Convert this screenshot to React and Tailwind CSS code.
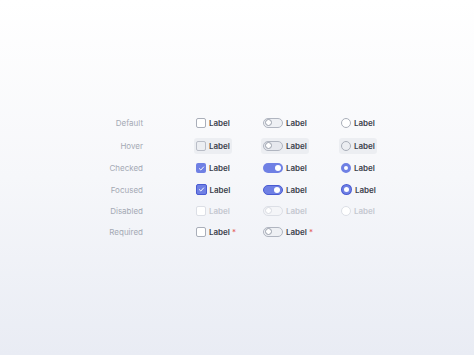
import React from 'react';

const Check = () => (
  <svg viewBox="0 0 10 10" className="w-[7px] h-[7px]" fill="none">
    <path d="M2 5.2l2 2 4-4.4" stroke="white" strokeWidth="1.4" strokeLinecap="round" strokeLinejoin="round" />
  </svg>
);

const Checkbox = ({ state }) => {
  if (state === 'checked')
    return <span className="w-[10px] h-[10px] rounded-[2px] bg-[#6f80e4] flex items-center justify-center"><Check /></span>;
  if (state === 'focused')
    return <span className="w-[11px] h-[11px] rounded-[2px] bg-[#6f80e4] border border-[#4a5bd2] flex items-center justify-center -ml-[0.5px]"><Check /></span>;
  if (state === 'disabled')
    return <span className="w-[10px] h-[10px] rounded-[2px] bg-white border border-[#dcdfe6]" />;
  if (state === 'hover')
    return <span className="w-[10px] h-[10px] rounded-[2px] bg-[#eceef2] border border-[#b9bdc7]" />;
  return <span className="w-[10px] h-[10px] rounded-[2px] bg-white border border-[#a9aeb9]" />;
};

const Toggle = ({ state }) => {
  if (state === 'checked' || state === 'focused')
    return (
      <span className={`w-[20px] h-[10px] rounded-full bg-[#6f80e4] flex items-center justify-end pr-[2px] ${state === 'focused' ? 'border border-[#4a5bd2]' : ''}`}>
        <span className="w-[6px] h-[6px] rounded-full bg-white" />
      </span>
    );
  const border = state === 'disabled' ? 'border-[#dcdfe6]' : 'border-[#b0b5c0]';
  const bg = state === 'hover' ? 'bg-[#e6e8ee]' : state === 'disabled' ? 'bg-[#f4f5f8]' : 'bg-[#eef0f4]';
  const knob = state === 'disabled' ? 'border-[#d8dbe2]' : 'border-[#9aa0ac]';
  return (
    <span className={`w-[20px] h-[10px] rounded-full border ${border} ${bg} flex items-center pl-[1px]`}>
      <span className={`w-[7px] h-[7px] rounded-full bg-white border ${knob}`} />
    </span>
  );
};

const Radio = ({ state }) => {
  if (state === 'checked')
    return <span className="w-[10px] h-[10px] rounded-full border-[3px] border-[#6f80e4] bg-white" />;
  if (state === 'focused')
    return (
      <span className="w-[11px] h-[11px] rounded-full bg-[#4a5bd2] p-[1px] flex">
        <span className="w-full h-full rounded-full border-[2.5px] border-[#6f80e4] bg-white" />
      </span>
    );
  if (state === 'disabled')
    return <span className="w-[10px] h-[10px] rounded-full bg-white border border-[#dcdfe6]" />;
  if (state === 'hover')
    return <span className="w-[10px] h-[10px] rounded-full bg-[#eceef2] border border-[#a9aeb9]" />;
  return <span className="w-[10px] h-[10px] rounded-full bg-white border border-[#a9aeb9]" />;
};

const Item = ({ state, children, required }) => {
  const hover = state === 'hover';
  const disabled = state === 'disabled';
  return (
    <span
      className={`inline-flex items-center gap-[3px] rounded-[3px] ${
        hover ? 'bg-[#eceef2] -ml-[2px] pl-[2px] pr-[2px] py-[2px]' : ''
      }`}
    >
      {children}
      <span className={`text-[8px] font-semibold ${disabled ? 'text-[#c4c8d0]' : 'text-[#3a3f4b]'}`}>Label</span>
      {required && <span className="text-[8px] text-[#e25c5c] -ml-[1px]">*</span>}
    </span>
  );
};

const rows = [
  { name: 'Default', state: 'default', h: 'h-[23px]' },
  { name: 'Hover', state: 'hover', h: 'h-[23px]' },
  { name: 'Checked', state: 'checked', h: 'h-[22px]' },
  { name: 'Focused', state: 'focused', h: 'h-[21px]' },
  { name: 'Disabled', state: 'disabled', h: 'h-[21px]' },
  { name: 'Required', state: 'required', h: 'h-[21px]' },
];

export default function App() {
  return (
    <div
      className="w-[474px] h-[355px] bg-gradient-to-b from-white via-[#f6f7fa] to-[#e9ecf4] pt-[111px]"
      style={{ fontFamily: 'Inter, "Noto Sans", sans-serif' }}
    >
      {rows.map((r) => (
        <div key={r.name} className={`grid grid-cols-[196px_67px_78px_1fr] items-center ${r.h}`}>
          <span className="pr-[53px] text-right text-[8px] text-[#a4a9b4]">{r.name}</span>
          <div className="flex items-center">
            <Item state={r.state} required={r.state === 'required'}>
              <Checkbox state={r.state} />
            </Item>
          </div>
          <div className="flex items-center">
            <Item state={r.state} required={r.state === 'required'}>
              <Toggle state={r.state} />
            </Item>
          </div>
          <div className="flex items-center">
            {r.state !== 'required' && (
              <Item state={r.state}>
                <Radio state={r.state} />
              </Item>
            )}
          </div>
        </div>
      ))}
    </div>
  );
}
